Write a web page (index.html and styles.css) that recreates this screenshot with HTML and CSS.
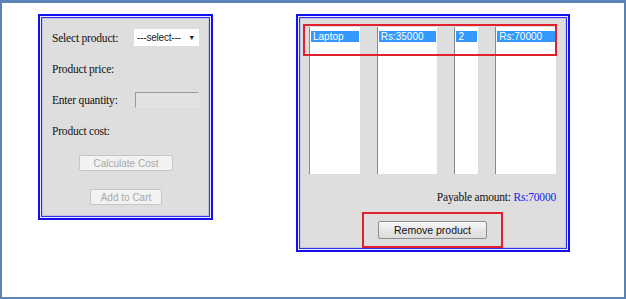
FILE: index.html
```html
<!DOCTYPE html>
<html>
<head>
<meta charset="utf-8">
<link rel="stylesheet" href="styles.css">
</head>
<body>
<div class="frame">
  <div class="panel left">
    <div class="panel-mid">
      <div class="panel-in form">
        <div class="grid">
          <span class="lbl">Select product:</span>
          <div class="select"><span>---select---</span><span class="arrow">&#9660;</span></div>
          <span class="lbl">Product price:</span>
          <span></span>
          <span class="lbl">Enter quantity:</span>
          <div class="qty"></div>
          <span class="lbl">Product cost:</span>
          <span></span>
        </div>
        <button class="btn disabled calc" disabled>Calculate Cost</button>
        <button class="btn disabled add" disabled>Add to Cart</button>
      </div>
    </div>
  </div>
  <div class="panel right">
    <div class="panel-mid">
      <div class="panel-in cart">
        <div class="lists">
          <div class="list w50"><span class="item">Laptop</span></div>
          <div class="list w60"><span class="item">Rs:35000</span></div>
          <div class="list w23"><span class="item">2</span></div>
          <div class="list w60"><span class="item">Rs:70000</span></div>
          <div class="mark mark-top"></div>
        </div>
        <div class="payable">Payable amount: <span class="amt">Rs:70000</span></div>
        <div class="remove-wrap">
          <button class="btn remove">Remove product</button>
          <div class="mark mark-btn"></div>
        </div>
      </div>
    </div>
  </div>
</div>
</body>
</html>
```
FILE: styles.css
```css
html, body { margin: 0; padding: 0; background: #fff; }
.frame {
  width: 626px; height: 299px; box-sizing: border-box;
  border-top: 3px solid #5b84b6; border-left: 2px solid #5b84b6;
  border-right: 2px solid #5b84b6; border-bottom: 2px solid #5b84b6;
  display: flex; align-items: flex-start;
  padding: 11px 0 0 36px; gap: 83px;
  font-family: "Liberation Serif", "Times New Roman", serif;
}
.panel { border: 2px solid #1010f0; padding: 1px; background: #eeeeff; box-sizing: border-box; }
.panel-mid { border: 1px solid #3030f0; height: 100%; box-sizing: border-box; }
.panel-in { border: 1px solid #c4c4e6; background: #dedede; height: 100%; box-sizing: border-box; }
.left { width: 175px; height: 206px; }
.right { width: 274px; height: 238px; }

.form { padding: 3px 0 0 9px; display: flex; flex-direction: column; }
.grid { display: grid; grid-template-columns: 82px 66px; grid-auto-rows: 31px; align-items: center; }
.lbl { font-size: 11.5px; color: #111; letter-spacing: -0.2px; white-space: nowrap; }
.select {
  width: 65px; height: 17px; background: #fff; box-sizing: border-box;
  font-family: "Liberation Sans", Arial, sans-serif; font-size: 10px; color: #222;
  display: flex; align-items: center; justify-content: space-between;
  padding: 0 4px 0 3px; white-space: nowrap; letter-spacing: -0.2px;
}
.arrow { font-size: 7px; }
.qty {
  width: 64px; height: 16px; box-sizing: border-box; margin-left: 1px;
  border: 1px solid #9a9a9a; border-right-color: #e6e6e6; border-bottom-color: #e6e6e6;
  background: #e2e2e2;
}
.btn {
  font-family: "Liberation Sans", Arial, sans-serif; font-size: 10px;
  border: 1px solid #a8a8a8; border-radius: 2px; padding: 0; box-sizing: border-box;
}
.disabled { color: #a8a8a8; background: #f2f2f2; border-color: #c6c6c6; }
.calc { width: 94px; height: 16px; margin: 9px 0 0 27px; }
.add { width: 72px; height: 16px; margin: 18px 0 0 38px; }

.cart { padding: 8px 9px 0 8px; display: flex; flex-direction: column; }
.lists { display: flex; gap: 17px; position: relative; height: 147px; }
.list {
  background: #fff; border-left: 1px solid #8a8a8a; box-sizing: border-box;
  height: 147px; padding: 4px 1px 0 1px; display: flex; flex-direction: column;
}
.w50 { width: 51px; }
.w60 { width: 61px; }
.w23 { width: 24px; }
.item {
  background: #3399ff; color: #fff; height: 11px; line-height: 11px;
  font-family: "Liberation Sans", Arial, sans-serif; font-size: 10px; padding-left: 2px;
}
.mark { position: absolute; border: 2px solid #e0202c; box-sizing: border-box; }
.mark-top { left: -6px; top: -3px; width: 254px; height: 32px; }
.payable {
  text-align: right; font-size: 11.5px; color: #111; margin-top: 17px; letter-spacing: -0.2px;
}
.amt { color: #1a1aee; }
.remove-wrap { position: relative; display: flex; justify-content: center; margin-top: 18px; }
.remove {
  width: 109px; height: 18px; font-size: 10.5px; color: #111;
  background: linear-gradient(#fafafa, #e6e6e6 50%, #dcdcdc); border-color: #8e8e8e;
}
.mark-btn { left: 53px; top: -9px; width: 141px; height: 36px; }
```
